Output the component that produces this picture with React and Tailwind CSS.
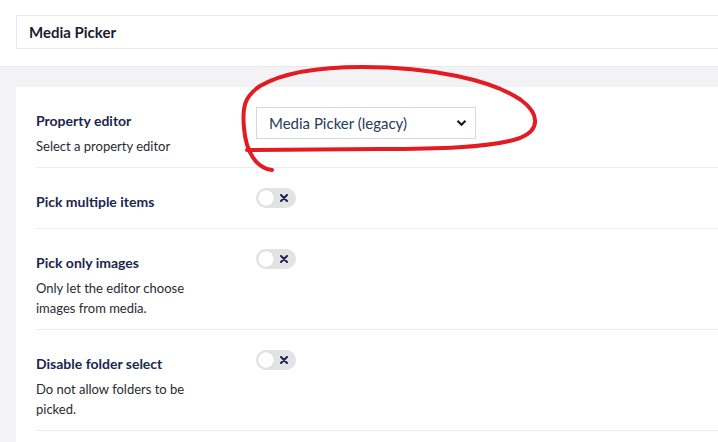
import React from 'react';

const rows = [
  { label: 'Property editor', desc: ['Select a property editor'], control: 'select' },
  { label: 'Pick multiple items', desc: [], control: 'toggle' },
  { label: 'Pick only images', desc: ['Only let the editor choose', 'images from media.'], control: 'toggle' },
  { label: 'Disable folder select', desc: ['Do not allow folders to be', 'picked.'], control: 'toggle' },
];

function Toggle() {
  return (
    <div className="relative w-[40px] h-[20px] rounded-full bg-[#e3e3e6]">
      <div className="absolute left-[2px] top-[2px] w-[16px] h-[16px] rounded-full bg-white shadow-[0_0_1px_rgba(0,0,0,0.25)]" />
      <svg className="absolute left-[24px] top-[6px]" width="8" height="8" viewBox="0 0 8 8">
        <path d="M1 1 L7 7 M7 1 L1 7" stroke="#1b264f" strokeWidth="2" strokeLinecap="round" />
      </svg>
    </div>
  );
}

function Select() {
  return (
    <div className="w-[220px] h-[32px] border border-[#d8d7d9] bg-white flex items-center justify-between pl-[12px] pr-[8px] text-[15px] text-[#283a5e]">
      <span>Media Picker (legacy)</span>
      <svg width="11" height="8" viewBox="0 0 11 8">
        <path d="M1.5 1.8 L5.5 5.8 L9.5 1.8" fill="none" stroke="#1b1b1b" strokeWidth="2.2" />
      </svg>
    </div>
  );
}

export default function App() {
  return (
    <div className="relative w-[718px] h-[442px] overflow-hidden bg-[#f3f3f5] font-['Lato',sans-serif]">
      <div className="h-[67px] bg-white border-b border-[#e9e9eb] pl-[16px] pt-[15px]">
        <div className="h-[34px] -mr-[10px] border border-[#e9e9eb] flex items-center pl-[12px] text-[15px] font-bold text-[#1b1b2f]">
          Media Picker
        </div>
      </div>
      <div className="mt-[20px] ml-[16px] bg-white pl-[20px] h-[400px]">
        {rows.map((row, i) => (
          <div key={i} className="flex border-b border-[#ececee] pt-[20px] pb-[11px]">
            <div className={`w-[220px] pt-[4px] ${row.desc.length === 0 ? 'pb-[5px]' : ''}`}>
              <div className="text-[14px] leading-[20px] font-bold text-[#1b264f]">{row.label}</div>
              {row.desc.length > 0 && (
                <div className="mt-[5px] text-[13px] leading-[20px] text-[#2a2a30]">
                  {row.desc.map((d, j) => (
                    <div key={j}>{d}</div>
                  ))}
                </div>
              )}
            </div>
            <div>{row.control === 'select' ? <Select /> : <Toggle />}</div>
          </div>
        ))}
      </div>
      <svg className="absolute inset-0 pointer-events-none" width="718" height="442" viewBox="0 0 718 442">
        <path
          d="M272 170 C256 168 246 152 244 128 C242 106 245 96 260 86 C286 71 322 67 362 67 C432 67 492 80 521 100 C540 114 540 130 520 138 C492 148 432 149 380 149 L247 150"
          fill="none"
          stroke="#e31b23"
          strokeWidth="4"
          strokeLinecap="round"
          strokeLinejoin="round"
        />
      </svg>
    </div>
  );
}
